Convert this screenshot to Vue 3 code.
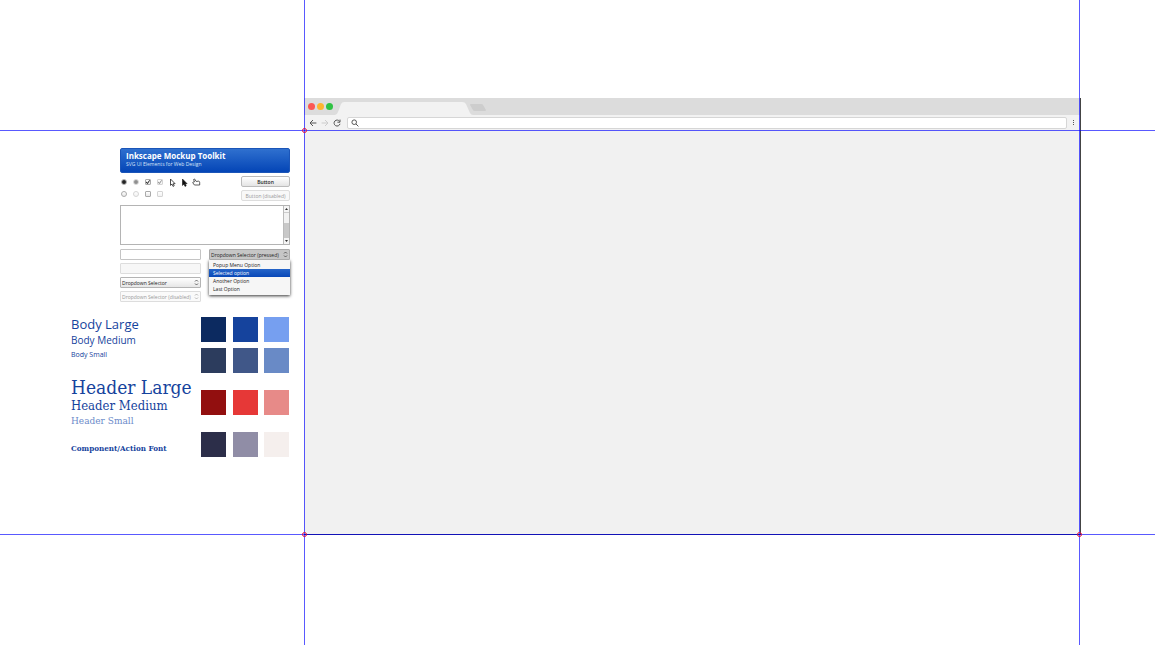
<script setup>
import { ref } from 'vue'

const options = ['Popup Menu Option', 'Selected option', 'Another Option', 'Last Option']
const selected = ref('Selected option')
const notes = ref('')
const address = ref('')
const palettes = [
  ['#0c2a60', '#15439d', '#769ff0', '#2c3c5d', '#405788', '#698ac6'],
  ['#920f0f', '#e63837', '#e78a88'],
  ['#2c2e49', '#908da6', '#f5efed']
]
</script>

<template>
  <main class="canvas">
    <aside class="side">
      <section class="kit">
        <header class="banner">
          <h1>Inkscape Mockup Toolkit</h1>
          <p>SVG UI Elements for Web Design</p>
        </header>

        <div class="widgets">
          <div class="marks">
            <input type="radio" name="a" checked aria-label="Radio on" />
            <input type="radio" name="b" class="dim" checked disabled aria-label="Radio on, disabled" />
            <input type="checkbox" checked aria-label="Check on" />
            <input type="checkbox" class="dim" checked disabled aria-label="Check on, disabled" />
            <svg class="cursor" viewBox="0 0 9 10"><path d="M2.5 2v6.4l1.5-1.3 1 2.3 1.2-.6-1-2.1h1.9z" fill="#fff" stroke="#222" stroke-width=".8" /></svg>
            <svg class="cursor" viewBox="0 0 9 10"><path d="M2.5 2v6.4l1.5-1.3 1 2.3 1.2-.6-1-2.1h1.9z" fill="#111" stroke="#111" stroke-width=".6" /></svg>
            <svg class="cursor" viewBox="0 0 9 10"><path d="M2.5 4.8 1.6 2.6q.3-1 1.1-.5l1.4 2.3 2.6-.2q1.1.3 1 1.3V8H2.4L.8 5.8q0-1.100 1-1z" fill="#fff" stroke="#333" stroke-width=".8" /></svg>
            <input type="radio" name="c" aria-label="Radio off" />
            <input type="radio" name="d" class="dim" disabled aria-label="Radio off, disabled" />
            <input type="checkbox" aria-label="Check off" />
            <input type="checkbox" class="dim" disabled aria-label="Check off, disabled" />
          </div>
          <div class="buttons">
            <button type="button">Button</button>
            <button type="button" disabled>Button (disabled)</button>
          </div>
        </div>

        <div class="notes">
          <textarea v-model="notes" aria-label="Text area"></textarea>
          <div class="scroll">
            <svg viewBox="0 0 5 5"><path d="M1 3.500h3l-1.500-2z" /></svg>
            <span class="thumb"></span>
            <span class="track"></span>
            <svg viewBox="0 0 5 5"><path d="M1 1.500h3l-1.500 2z" /></svg>
          </div>
        </div>

        <div class="fields">
          <div class="stack">
            <input class="text" type="text" aria-label="Text field" />
            <input class="text" type="text" disabled aria-label="Text field, disabled" />
            <div class="pick">
              <select aria-label="Dropdown"><option>Dropdown Selector</option></select>
              <svg viewBox="0 0 5 7"><path d="M1 2.5 2.5 1 4 2.5M1 4.5 2.5 6 4 4.5" /></svg>
            </div>
            <div class="pick off">
              <select disabled aria-label="Dropdown, disabled"><option>Dropdown Selector (disabled)</option></select>
              <svg viewBox="0 0 5 7"><path d="M1 2.5 2.5 1 4 2.5M1 4.5 2.5 6 4 4.5" /></svg>
            </div>
          </div>
          <div class="open">
            <div class="pick pressed">
              <select aria-label="Dropdown, pressed"><option>Dropdown Selector (pressed)</option></select>
              <svg viewBox="0 0 5 7"><path d="M1 2.5 2.5 1 4 2.5M1 4.5 2.5 6 4 4.5" /></svg>
            </div>
            <ul class="menu" role="listbox" aria-label="Options">
              <li
                v-for="option in options"
                :key="option"
                role="option"
                :aria-selected="option === selected"
                :class="{ active: option === selected }"
                @click="selected = option"
              >{{ option }}</li>
            </ul>
          </div>
        </div>
      </section>

      <section class="styles">
        <div class="type">
          <p class="body-l">Body Large</p>
          <p class="body-m">Body Medium</p>
          <p class="body-s">Body Small</p>
          <h2 class="head-l">Header Large</h2>
          <h3 class="head-m">Header Medium</h3>
          <h4 class="head-s">Header Small</h4>
          <p class="action">Component/Action Font</p>
        </div>
        <div class="palettes">
          <div v-for="(group, i) in palettes" :key="i" class="palette">
            <span v-for="color in group" :key="color" :style="{ background: color }"></span>
          </div>
        </div>
      </section>
    </aside>

    <section class="browser">
      <div class="tabs">
        <span class="light red"></span>
        <span class="light amber"></span>
        <span class="light green"></span>
        <svg class="tab" viewBox="0 0 154 13">
          <path d="M0 13Q2 13 3 10L6 2Q7 0 9 0H127Q130 0 131 2L135 11Q136 13 138 13Z" fill="#f2f2f2" />
          <path d="M136 2h10q2 0 2 1l3 5q0 1-1 1h-10q-2 0-2-1l-3-5q0-1 1-1z" fill="#cdcdcd" />
        </svg>
      </div>
      <div class="toolbar">
        <button type="button" aria-label="Back"><svg viewBox="0 0 8 8"><path d="M7.4 4H1.2M4 1 1 4l3 3" /></svg></button>
        <button type="button" class="faint" aria-label="Forward"><svg viewBox="0 0 8 8"><path d="M.6 4h6.2M4 1l3 3-3 3" /></svg></button>
        <button type="button" aria-label="Reload"><svg viewBox="0 0 8 8"><path d="M6.6 2.4A3 3 0 1 0 7 4.8M7 .6v2.6H4.4" /></svg></button>
        <label class="address">
          <svg viewBox="0 0 8 8"><circle cx="3.2" cy="3.2" r="2.3" /><path d="m5 5 2.4 2.4" /></svg>
          <input v-model="address" type="text" aria-label="Address" />
        </label>
        <button type="button" class="more" aria-label="Menu"><span></span><span></span><span></span></button>
      </div>
      <div class="view">
        <i class="guide across top"></i>
        <i class="guide across bottom"></i>
        <i class="guide down left"></i>
        <i class="guide down right"></i>
        <i class="knot k1"></i>
        <i class="knot k2"></i>
        <i class="knot k3"></i>
      </div>
    </section>
  </main>
</template>

<style>
body {
  margin: 0;
  background: #fff;
}
</style>

<style scoped>
* {
  box-sizing: border-box;
}
h1, h2, h3, h4, p, ul {
  margin: 0;
  padding: 0;
}
.canvas {
  display: flex;
  align-items: flex-start;
  min-height: 100vh;
  padding-right: 75px;
  overflow: hidden;
  font-family: "Open Sans", sans-serif;
}
button, input, select, textarea {
  appearance: none;
  margin: 0;
  padding: 0;
  border-radius: 1px;
  font-family: inherit;
  font-size: 5px;
  line-height: 8px;
  color: #222;
}
.side {
  flex: none;
  width: 304px;
  padding: 148px 14px 0 70px;
}
.kit {
  margin-left: 50px;
}
.banner {
  height: 25px;
  padding: 2px 5px;
  border: 1px solid #1b55b8;
  border-radius: 2px;
  background: linear-gradient(#2f70cf, #0445b6);
  color: #fff;
}
.banner h1 {
  font-size: 8px;
  line-height: 10px;
  font-weight: 700;
}
.banner p {
  font-size: 5px;
  line-height: 7px;
  color: #d5e3fa;
}
.widgets {
  display: flex;
  justify-content: space-between;
  margin-top: 3px;
}
.marks {
  display: grid;
  grid-template-columns: repeat(7, 12px);
  grid-auto-rows: 12px;
  place-items: center start;
}
.marks input {
  display: grid;
  place-items: center;
  width: 6px;
  height: 6px;
  margin-left: 1px;
  border: 1px solid #aaa;
  background: linear-gradient(#fff, #e8e8e8);
}
.marks input[type="radio"] {
  border-radius: 50%;
}
.marks input:checked::before {
  content: "";
  width: 4px;
  height: 4px;
  border-radius: 50%;
  background: #222;
}
.marks input[type="checkbox"]:checked::before {
  width: 4px;
  height: 4px;
  border-radius: 0;
  clip-path: polygon(0 40%, 35% 70%, 85% 0, 100% 15%, 40% 100%, 0 70%);
}
.marks .dim {
  opacity: 0.5;
}
.cursor {
  width: 9px;
  height: 10px;
}
.buttons {
  display: grid;
  gap: 3px;
  width: 49px;
}
.buttons button {
  height: 11px;
  border: 1px solid #bbb;
  border-radius: 2px;
  background: linear-gradient(#fff, #e4e4e4);
}
.buttons button:first-child {
  font-weight: 600;
}
.buttons button:disabled {
  border-color: #ddd;
  background: #f8f8f8;
  color: #999;
}
.notes {
  display: flex;
  height: 40px;
  margin-top: 4px;
  border: 1px solid #b4b4b4;
}
.notes textarea {
  flex: 1;
  min-width: 0;
  border: 0;
  resize: none;
}
.scroll {
  display: flex;
  flex-direction: column;
  width: 6px;
  border-left: 1px solid #bbb;
  background: #f5f5f5;
}
.scroll svg {
  width: 5px;
  height: 6px;
  fill: #333;
}
.thumb {
  flex: 2;
  border-top: 1px solid #ccc;
  background: #f2f2f2;
}
.track {
  flex: 3;
  background: #c8c8c8;
}
.fields {
  display: grid;
  grid-template-columns: 1fr 1fr;
  gap: 8px;
  margin-top: 4px;
}
.stack {
  display: grid;
  gap: 3px;
}
.text {
  width: 100%;
  height: 11px;
  padding: 0 3px;
  border: 1px solid #c4c4c4;
  border-radius: 1px;
}
.text:disabled {
  border-color: #ddd;
  background: #f7f7f7;
}
.pick {
  position: relative;
  display: flex;
  height: 11px;
}
.pick select {
  width: 100%;
  padding: 0 7px 0 1px;
  border: 1px solid #b4b4b4;
  background: linear-gradient(#fff, #e6e6e6);
}
.pick svg {
  position: absolute;
  right: 2px;
  top: 2px;
  width: 5px;
  height: 7px;
  fill: none;
  stroke: #444;
  stroke-width: 0.8;
  pointer-events: none;
}
.pick.off select {
  border-color: #ddd;
  background: #fafafa;
  color: #999;
  opacity: 1;
}
.pick.off svg {
  stroke: #aaa;
}
.pick.pressed select {
  border-color: #aaa;
  background: #c6c6c6;
}
.menu {
  padding: 1px 0 2px;
  background: #f6f6f6;
  box-shadow: 0 1px 3px rgba(0, 0, 0, 0.8);
  list-style: none;
  font-size: 5px;
  line-height: 8px;
  color: #222;
}
.menu li {
  padding-left: 4px;
}
.menu .active {
  background: linear-gradient(#2665c8, #0848b8);
  color: #fff;
}
.styles {
  display: flex;
  justify-content: space-between;
  margin-top: 15px;
  color: #15439d;
}
.type {
  width: 130px;
  padding-left: 1px;
  white-space: nowrap;
}
.body-l {
  font-size: 13px;
  line-height: 14px;
}
.body-m {
  font-size: 10px;
  line-height: 18px;
}
.body-s {
  font-size: 7px;
  line-height: 12px;
}
.head-l, .head-m, .head-s, .action {
  font-family: "Roboto Slab", "DejaVu Serif Condensed", "DejaVu Serif", serif;
  font-weight: 400;
}
.head-l {
  margin-top: 14px;
  font-size: 19px;
  line-height: 24px;
}
.head-m {
  font-size: 13px;
  line-height: 14px;
}
.head-s {
  font-size: 10px;
  line-height: 16px;
  color: #6c8bca;
}
.action {
  margin-top: 12px;
  font-size: 8px;
  line-height: 14px;
  font-weight: 700;
}
.palettes {
  display: grid;
  align-content: start;
  gap: 17px;
  width: 88px;
  margin-right: 1px;
}
.palette {
  display: grid;
  grid-template-columns: repeat(3, 25px);
  justify-content: space-between;
  row-gap: 6px;
}
.palette span {
  height: 25px;
}
.browser {
  flex: 1;
  min-width: 0;
  margin-top: 98px;
  background: #f1f1f1;
  box-shadow: 1px 0 0 #444;
}
.tabs {
  display: flex;
  align-items: center;
  gap: 2px;
  height: 17px;
  padding-left: 4px;
  background: #dcdcdc;
}
.light {
  width: 7px;
  height: 7px;
  margin-bottom: 1px;
  border-radius: 50%;
}
.red {
  background: #fc5753;
}
.amber {
  background: #fdb52f;
}
.green {
  background: #2fc243;
}
.tab {
  align-self: flex-end;
  width: 154px;
  height: 13px;
}
.toolbar {
  display: flex;
  align-items: center;
  gap: 4px;
  height: 15px;
  padding: 0 5px;
  background: #f2f2f2;
}
.toolbar button {
  display: grid;
  place-items: center;
  width: 8px;
  height: 12px;
  border: 0;
  background: none;
}
.toolbar svg {
  flex: none;
  width: 8px;
  height: 8px;
  fill: none;
  stroke: #555;
  stroke-width: 1;
}
.toolbar .faint svg {
  stroke: #ccc;
}
.address {
  display: flex;
  flex: 1;
  align-items: center;
  gap: 3px;
  height: 12px;
  margin-left: 2px;
  padding: 0 3px;
  border: 1px solid #d6d6d6;
  border-radius: 2px;
  background: #fff;
}
.address input {
  flex: 1;
  min-width: 0;
  border: 0;
  outline: 0;
  background: none;
}
.toolbar .more {
  width: 4px;
  align-content: center;
  gap: 1px;
}
.more span {
  width: 1px;
  height: 1px;
  background: #555;
}
.view {
  position: relative;
  height: 405px;
  border-bottom: 1px solid #333;
}
.guide {
  position: absolute;
  background: rgba(0, 0, 255, 0.65);
  pointer-events: none;
}
.across {
  left: -100vw;
  width: 300vw;
  height: 1px;
}
.down {
  top: -100vh;
  width: 1px;
  height: 300vh;
}
.top {
  top: 0;
}
.bottom {
  bottom: -1px;
}
.left {
  left: 0;
}
.right {
  right: 0;
}
.knot {
  position: absolute;
  width: 5px;
  height: 5px;
  border: 1px solid #e01040;
  border-radius: 50%;
}
.k1 {
  top: -2px;
  left: -2px;
}
.k2 {
  bottom: -3px;
  left: -2px;
}
.k3 {
  right: -2px;
  bottom: -3px;
}
</style>
